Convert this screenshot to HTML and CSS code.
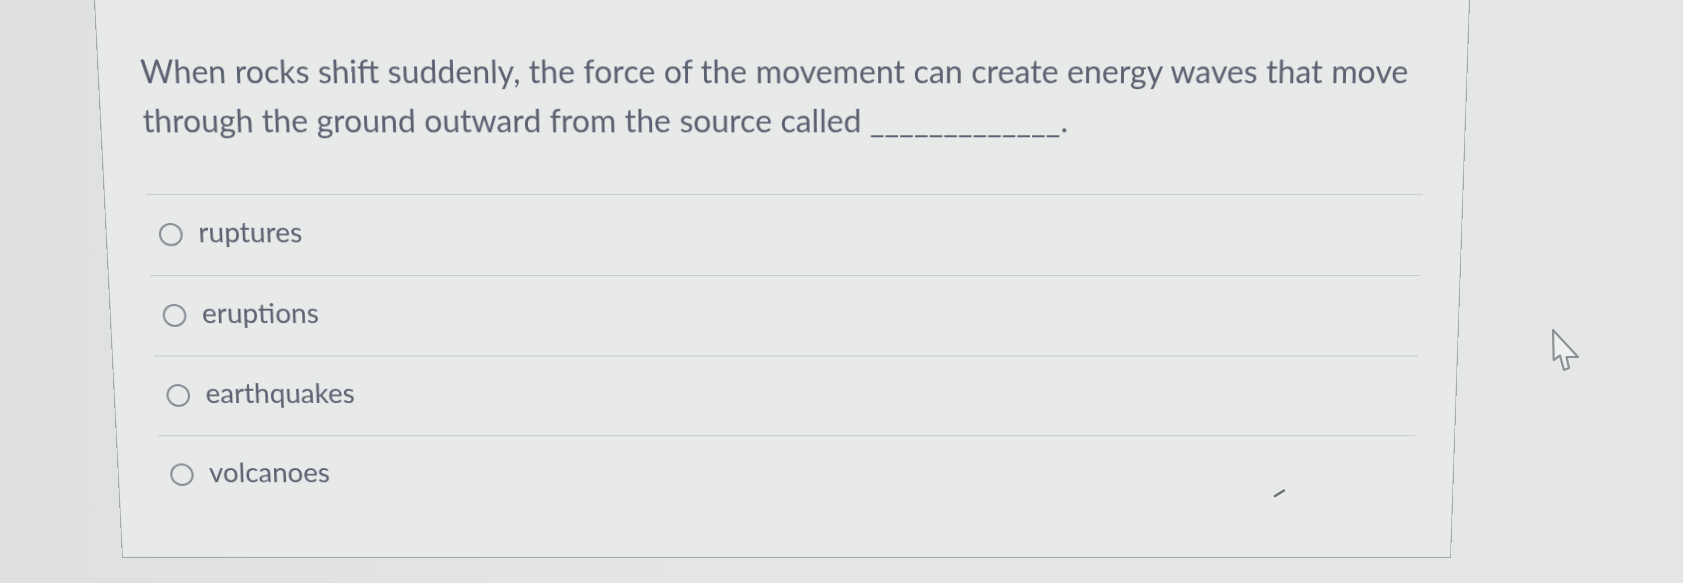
FILE: index.html
```html
<!DOCTYPE html>
<html lang="en">
<head>
<meta charset="utf-8">
<title>Quiz question</title>
<link rel="stylesheet" href="styles.css">
</head>
<body>
<div class="screen">
  <div class="card">
    <p class="question">When rocks shift suddenly, the force of the movement can create energy waves that move through the ground outward from the source called _____________.</p>
    <ul class="answers">
      <li class="answer"><span class="radio"></span><span class="label">ruptures</span></li>
      <li class="answer"><span class="radio"></span><span class="label">eruptions</span></li>
      <li class="answer"><span class="radio"></span><span class="label">earthquakes</span></li>
      <li class="answer"><span class="radio"></span><span class="label">volcanoes</span></li>
    </ul>
  </div>
  <svg class="cursor" width="30" height="44" viewBox="0 0 30 44" aria-hidden="true">
    <path d="M2 2 L2.7 32 L9 27.5 L13 42 L18 40 L15.5 29 L27 29 Z" fill="#eef0ef" stroke="#8e9296" stroke-width="2.2" stroke-linejoin="round"/>
  </svg>
  <svg class="scratch" width="14" height="10" viewBox="0 0 14 10" aria-hidden="true">
    <path d="M2 8 L11 2.5" stroke="#6b6f78" stroke-width="2.4" stroke-linecap="round"/>
  </svg>
</div>
</body>
</html>
```
FILE: styles.css
```css
html, body {
  margin: 0;
  padding: 0;
}
body {
  width: 1683px;
  height: 583px;
  overflow: hidden;
  background: linear-gradient(90deg, #dee1e0 0%, #e3e6e5 40%, #e5e7e6 100%);
  font-family: Lato, "Open Sans", "Liberation Sans", sans-serif;
  color: #5c6171;
}
.screen {
  position: relative;
  width: 1683px;
  height: 583px;
  padding-left: 94px;
  box-sizing: border-box;
}
.card {
  width: 1376px;
  height: 580px;
  box-sizing: border-box;
  background: #e8eae9;
  border-left: 1.5px solid #a5a9ac;
  border-right: 1.5px solid #a5a9ac;
  border-bottom: 1.5px solid #a5a9ac;
  padding: 47px 40px 0 42px;
  transform-origin: 820px 0;
  transform: perspective(1500px) rotateX(-5.25deg);
}
.question {
  margin: 0 0 50px 0;
  font-size: 32.2px;
  line-height: 50px;
  word-spacing: 0.3px;
}
.answers {
  list-style: none;
  margin: 0;
  padding: 0;
}
.answer {
  display: flex;
  align-items: center;
  border-top: 1px solid #c6cacb;
  padding: 18px 0 25px 11px;
  height: 40px;
}
.radio {
  width: 24px;
  height: 24px;
  box-sizing: border-box;
  border: 2.7px solid #878b94;
  border-radius: 50%;
  margin-top: 6px;
  margin-right: 16px;
  flex: none;
}
.label {
  font-size: 28.5px;
  line-height: 40px;
}
.cursor {
  position: absolute;
  left: 1551px;
  top: 328px;
}
.scratch {
  position: absolute;
  left: 1273px;
  top: 488px;
}
```
